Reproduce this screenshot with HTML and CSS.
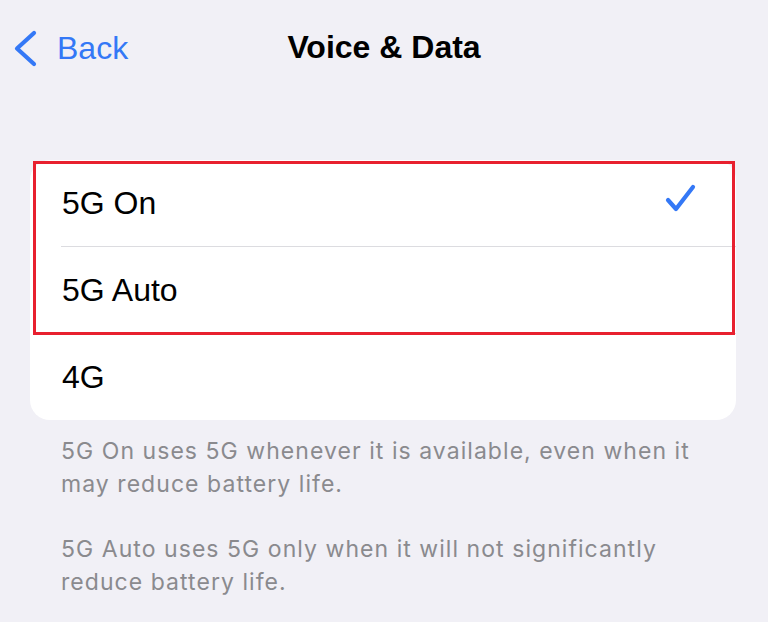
FILE: index.html
```html
<!DOCTYPE html>
<html>
<head>
<meta charset="utf-8">
<link rel="stylesheet" href="styles.css">
</head>
<body>
<div class="nav">
  <div class="back">
    <svg class="chev" width="26" height="40" viewBox="0 0 26 40"><path d="M20 4 L3 19.5 L20 35" fill="none" stroke="#3478f6" stroke-width="4.2" stroke-linecap="round" stroke-linejoin="round"/></svg>
    <span class="back-label">Back</span>
  </div>
  <div class="title">Voice &amp; Data</div>
  <div></div>
</div>
<div class="card">
  <div class="row"><span class="label">5G On</span>
    <svg class="check" width="34" height="32" viewBox="0 0 34 32"><path d="M4 17 L12 26 L29 4" fill="none" stroke="#3478f6" stroke-width="4.2" stroke-linecap="round" stroke-linejoin="round"/></svg>
  </div>
  <div class="row"><span class="label">5G Auto</span></div>
  <div class="row last"><span class="label">4G</span></div>
  <div class="highlight"></div>
</div>
<div class="footer">
  <p>5G On uses 5G whenever it is available, even when it<br>may reduce battery life.</p>
  <p>5G Auto uses 5G only when it will not significantly<br>reduce battery life.</p>
</div>
</body>
</html>
```
FILE: styles.css
```css
html, body {
  margin: 0;
  padding: 0;
  background: #f1f0f6;
  width: 768px;
  height: 622px;
  overflow: hidden;
  font-family: "Liberation Sans", Arial, sans-serif;
}
.nav {
  display: grid;
  grid-template-columns: 1fr auto 1fr;
  align-items: center;
  padding-top: 27px;
  height: 36px;
}
.back {
  display: flex;
  align-items: center;
  padding-left: 14px;
  color: #3478f6;
  font-size: 32px;
  line-height: 36px;
}
.chev {
  display: block;
  margin-top: 2px;
}
.back-label {
  margin-left: 17px;
}
.title {
  font-size: 32px;
  font-weight: bold;
  line-height: 36px;
  color: #000;
  margin-top: -2px;
}
.card {
  position: relative;
  margin: 97px 32px 0 30px;
  background: #fff;
  border-radius: 20px;
}
.row {
  height: 86px;
  margin-left: 31px;
  border-bottom: 1px solid #dcdce0;
  display: flex;
  align-items: center;
  justify-content: space-between;
  padding-right: 38px;
}
.row.last {
  border-bottom: none;
}
.label {
  font-size: 32px;
  line-height: 36px;
  color: #000;
  margin-left: 1px;
}
.check {
  display: block;
  margin-top: -9px;
}
.highlight {
  position: absolute;
  left: 3px;
  top: 1px;
  width: 702px;
  height: 174px;
  box-sizing: border-box;
  border: 3px solid #e8202f;
}
.footer {
  margin: 15px 20px 0 61px;
  font-family: Inter, "Liberation Sans", sans-serif;
  font-size: 23px;
  letter-spacing: 1.05px;
  line-height: 33px;
  color: #8a8a8e;
}
.footer p {
  margin: 0 0 32px 0;
}
```
